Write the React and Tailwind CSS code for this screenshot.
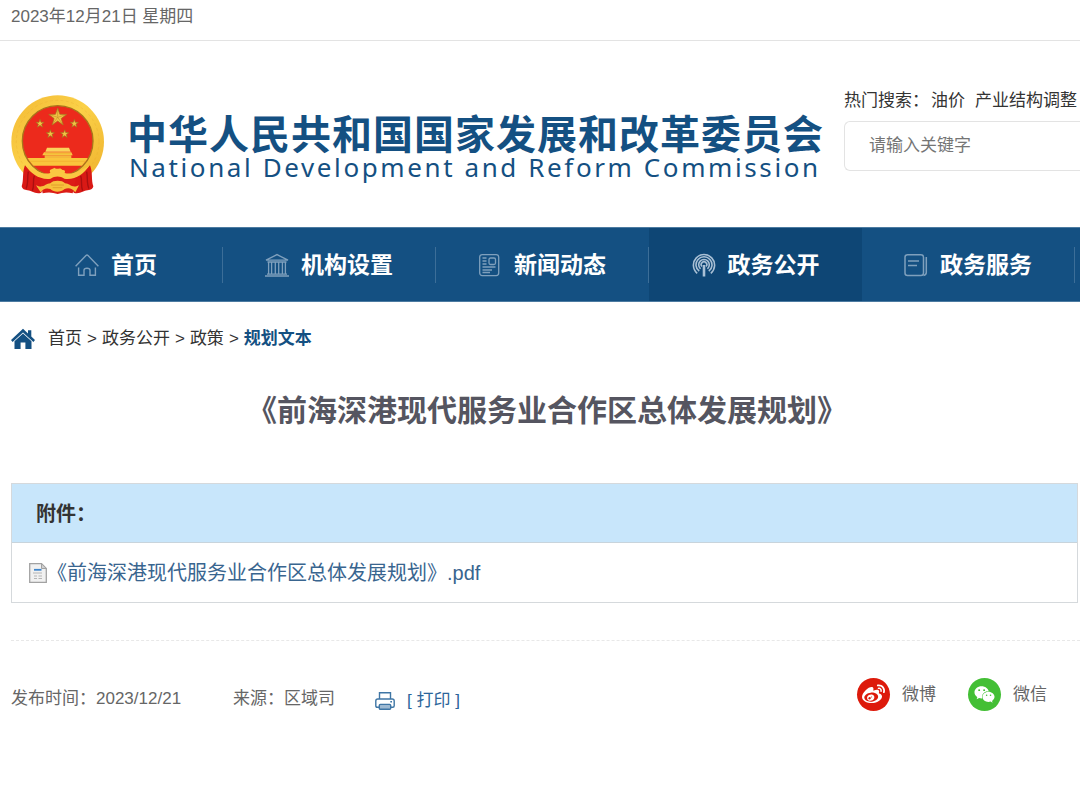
import React from "react";
import { FaWeibo, FaWeixin } from "react-icons/fa";

const NAVY = "#145082";

function starPoints(cx, cy, r) {
  const pts = [];
  for (let i = 0; i < 10; i++) {
    const radius = i % 2 === 0 ? r : r * 0.4;
    const a = (Math.PI / 5) * i - Math.PI / 2;
    pts.push(`${(cx + radius * Math.cos(a)).toFixed(1)},${(cy + radius * Math.sin(a)).toFixed(1)}`);
  }
  return pts.join(" ");
}

function Emblem() {
  return (
    <svg viewBox="30 45 285 300" className="h-[100px] w-[95px] shrink-0" role="img" aria-label="国徽">
      <defs>
        <linearGradient id="gold" x1="0" y1="0" x2="1" y2="1">
          <stop offset="0" stopColor="#f3b935" />
          <stop offset="0.45" stopColor="#fbd148" />
          <stop offset="1" stopColor="#eeb02c" />
        </linearGradient>
        <clipPath id="disc">
          <circle cx="173" cy="183" r="104" />
        </clipPath>
      </defs>
      <circle cx="173" cy="185" r="139" fill="url(#gold)" />
      <circle cx="173" cy="185" r="124" fill="none" stroke="#e2a526" strokeWidth="3" strokeDasharray="9 7" opacity="0.25" />
      <circle cx="173" cy="183" r="106" fill="#ec2a1c" stroke="#a8761b" strokeWidth="4" />
      <g fill="#f2c244" stroke="#a06f1c" strokeWidth="2">
        <polygon points={starPoints(173, 112, 28)} />
        <polygon points={starPoints(120, 131, 13)} />
        <polygon points={starPoints(223, 131, 13)} />
        <polygon points={starPoints(151, 162, 13)} />
        <polygon points={starPoints(194, 162, 13)} />
      </g>
      <path d="M173 84V110M173 112L200 103M173 112L190 135M173 112L156 135M173 112L146 103" stroke="#b98220" strokeWidth="1.5" />
      <g clipPath="url(#disc)">
        <path d="M141 203H207L212 215H136Z" fill="#fbd35a" />
        <path d="M132 217H214L218 226H127Z" fill="#f8c843" />
        <path d="M134 226H214V234H134Z" fill="#f4b73c" />
        <path d="M76 234H270V257H76Z" fill="#fac53c" />
        <path d="M82 244H264M135 221H212" stroke="#f0ae2d" strokeWidth="2" />
      </g>
      <path d="M75 256C88 272 112 286 140 298L124 338C105 344 93 330 82 331C73 330 67 327 65 319C72 302 66 278 75 256Z" fill="#d91915" />
      <path d="M270 256C257 272 233 286 205 298L221 338C240 344 252 330 263 331C274 330 279 325 280 319C273 302 279 278 270 256Z" fill="#d91915" />
      <path d="M85 275C81 295 86 310 78 326M103 287C97 304 104 317 97 332M260 275C264 295 259 310 267 326M242 287C248 304 241 317 248 332" fill="none" stroke="#a90f10" strokeWidth="4" />
      <path d="M118 296L173 285L228 296L218 340Q195 334 173 342Q150 334 128 340Z" fill="#dc1d17" />
      <path d="M78 258C106 272 130 286 151 279C145 265 159 269 163 263C170 270 178 262 184 267C187 273 199 267 194 279C216 286 240 272 267 258C252 282 224 301 193 296C181 287 164 287 152 296C121 301 92 281 78 258Z" fill="#fac842" />
      <path d="M108 316C130 327 137 310 151 310C159 300 187 300 195 310C210 310 215 327 237 316L226 337C217 324 204 323 194 327C181 338 163 338 151 327C140 323 129 325 122 337Z" fill="#f7bf3c" />
      <path d="M153 315L192 315M158 323H187" stroke="#d99024" strokeWidth="2" />
    </svg>
  );
}

const iconProps = {
  viewBox: "0 0 24 24",
  className: "size-6 shrink-0",
  fill: "none",
  stroke: "currentColor",
  "aria-hidden": true,
};

function HouseIcon() {
  return (
    <svg {...iconProps} strokeWidth="1.4">
      <path d="M.6 13.2 11 2.4Q12 1.4 13 2.4L23.4 13.2M3.6 14.6V22.2H9V17.2Q9 15.2 12 15.2T15 17.2V22.2H20.4V14.6" />
    </svg>
  );
}

function HallIcon() {
  return (
    <svg {...iconProps} strokeWidth="1.3">
      <path d="M1 7.2 12 1.6 23 7.2ZM2.5 9H21.5M3.6 9V21M6.6 9V21M10.3 9V21M13.7 9V21M17.4 9V21M20.4 9V21M2 21.2H22M0 23H24" />
    </svg>
  );
}

function NewsIcon() {
  return (
    <svg {...iconProps} strokeWidth="1.3">
      <rect x="1.7" y="1.6" width="19" height="21" rx="2.5" />
      <rect x="11" y="5" width="6.5" height="6.5" rx="1.5" />
      <path d="M4.5 5H8.5M4.5 8H8.5M4.5 11H8.5M4.5 14H17.5M4.5 17H14M4.5 19.5H12" />
    </svg>
  );
}

function BroadcastIcon() {
  return (
    <svg {...iconProps} strokeWidth="1.6">
      <path d="M5.2 20.3A10.6 10.6 0 1 1 18.8 20.3M7.2 18.2A8 8 0 1 1 16.8 18.2M8.5 15.8A5.3 5.3 0 1 1 15.5 15.8M9.9 13.5A2.8 2.8 0 1 1 14.1 13.5" />
      <path d="M12 12V23.5" strokeWidth="2.6" />
    </svg>
  );
}

function ServiceIcon() {
  return (
    <svg {...iconProps} strokeWidth="1.5">
      <rect x="1" y="1.7" width="18.5" height="20.8" rx="2.5" />
      <path d="M4 8H15M4 12.5H13M19.5 22.4Q22.2 22 22.3 19.5V4" />
    </svg>
  );
}

function HomeSolidIcon() {
  return (
    <svg viewBox="0 0 24 22" className="h-[22px] w-6 shrink-0" fill={NAVY} aria-hidden="true">
      <path d="M12 .8 17 5.4V2.3H20.3V8.4L24 12 22.4 13.9 12 4.6 1.6 13.9 0 12Z" />
      <path d="M12 5.6 20.5 13.2V21H14.4V14.5H9.6V21H3.5V13.2Z" />
    </svg>
  );
}

function FileIcon() {
  return (
    <svg viewBox="0 0 18 20" className="h-5 w-[18px] shrink-0" fill="none" aria-hidden="true">
      <path d="M.7.7H12.5L17.3 5.5V19.3H.7Z" fill="#f1f1f1" stroke="#a2a2a2" strokeWidth="1.3" />
      <path d="M12.5.7V5.5H17.3Z" fill="#d2d2d2" stroke="#a2a2a2" />
      <path d="M5 6.8H12.5" stroke="#3f86cc" strokeWidth="1.8" />
      <path d="M4 10H13M5 13H8M9.5 13H13M5 15.5H8M9.5 15.5H13" stroke="#b5b5b5" strokeWidth="1.2" />
    </svg>
  );
}

function PrintIcon() {
  return (
    <svg viewBox="0 0 20 18" className="h-[18px] w-5 shrink-0" fill="none" stroke="#3f76a5" strokeWidth="1.4" aria-hidden="true">
      <path d="M4.5 7V.8H15.5V7" />
      <path d="M4 15.3H2.2Q.8 15.3.8 13.8V9Q.8 7 2.8 7H17.2Q19.2 7 19.2 9V13.8Q19.2 15.3 17.8 15.3H16" />
      <rect x="4.3" y="12.4" width="11.4" height="4.8" rx="1" fill="#9db9d2" />
      <path d="M15.3 9.8H17" />
    </svg>
  );
}

const navItems = [
  { label: "首页", Icon: HouseIcon },
  { label: "机构设置", Icon: HallIcon },
  { label: "新闻动态", Icon: NewsIcon },
  { label: "政务公开", Icon: BroadcastIcon, active: true },
  { label: "政务服务", Icon: ServiceIcon },
];

export default function App() {
  return (
    <div className="overflow-x-hidden bg-white font-['Liberation_Sans','Noto_Sans_CJK_SC',sans-serif] text-[17px] leading-6 text-[#666]">
      <div className="border-b border-[#e3e3e3] px-[11px] pt-[5px] pb-[11px]">2023年12月21日 星期四</div>

      <header className="flex items-start pt-[48px] pl-[10px]">
        <a href="#" className="flex shrink-0 items-start gap-[22px] pt-[6px] pb-8 text-[#145082]">
          <Emblem />
          <span className="flex flex-col pt-[17px] whitespace-nowrap">
            <span className="text-[40px] leading-[46px] font-bold tracking-wide">中华人民共和国国家发展和改革委员会</span>
            <span className="pl-[2px] font-['Noto_Sans','Open_Sans',sans-serif] text-[26px] leading-[18px] tracking-widest">
              National Development and Reform Commission
            </span>
          </span>
        </a>
        <form className="ml-auto w-[236px] shrink-0" onSubmit={(e) => e.preventDefault()}>
          <div className="flex gap-[10px] overflow-hidden whitespace-nowrap text-[#333]">
            <label htmlFor="keyword" className="-mr-2 shrink-0">热门搜索：</label>
            <a href="#" className="shrink-0">油价</a>
            <a href="#" className="shrink-0">产业结构调整</a>
          </div>
          <input
            id="keyword"
            type="text"
            placeholder="请输入关键字"
            className="mt-2 block h-[50px] w-full rounded-l-md border border-r-0 border-[#e3e3e3] px-6 placeholder:text-[#757575]"
          />
        </form>
      </header>

      <nav className="flex overflow-hidden border-y border-[#4c7ba1] bg-[#145082] pl-[10px]">
        {navItems.map(({ label, Icon, active }) => (
          <a
            key={label}
            href="#"
            className={
              active
                ? "flex h-[73px] w-[213px] shrink-0 items-center bg-[#0e4675]"
                : "flex h-[73px] w-[213px] shrink-0 items-center"
            }
          >
            <span
              className={
                active
                  ? "flex h-9 flex-1 items-center justify-center gap-3 text-[#a9c0d5]"
                  : "flex h-9 flex-1 items-center justify-center gap-3 border-r border-[#3c6e98] text-[#7fa0bd]"
              }
            >
              <Icon />
              <span className="text-[23px] leading-8 font-bold text-white">{label}</span>
            </span>
          </a>
        ))}
      </nav>

      <main className="pl-[11px]">
        <div className="flex items-center gap-[13px] pt-[25px] text-[#333]">
          <HomeSolidIcon />
          <div className="flex gap-[5px]">
            <a href="#">首页</a>
            <span>&gt;</span>
            <a href="#">政务公开</a>
            <span>&gt;</span>
            <a href="#">政策</a>
            <span>&gt;</span>
            <a href="#" className="font-bold text-[#145082]">规划文本</a>
          </div>
        </div>

        <h1 className="mt-10 pl-[3px] text-center text-[30px] leading-10 font-bold text-[#555560]">
          《前海深港现代服务业合作区总体发展规划》
        </h1>

        <section className="mt-[52px] mr-[2px] border border-[#d5d9dc] text-[20px]">
          <h2 className="border-b border-[#c8d4dc] bg-[#c8e6fb] pt-4 pb-[14px] pl-6 leading-7 font-bold text-[#333]">附件：</h2>
          <a href="#" className="flex items-center pt-4 pb-[15px] pl-[17px] leading-7 text-[#39658f]">
            <FileIcon />
            <span>《前海深港现代服务业合作区总体发展规划》.pdf</span>
          </a>
        </section>

        <footer className="mt-[37px] flex items-start border-t border-dashed border-[#e8e8e8] pt-[37px] pr-[33px]">
          <span className="pt-[9px]">发布时间：2023/12/21</span>
          <span className="ml-[52px] pt-[9px]">来源：区域司</span>
          <button type="button" className="ml-10 flex items-center gap-3 pt-[11px] text-[#2c659a]">
            <PrintIcon />
            <span>[ 打印 ]</span>
          </button>
          <div className="ml-auto flex gap-8">
            <a href="#" className="flex items-center gap-3">
              <span className="flex size-[33px] items-center justify-center rounded-full bg-[#dd1a0b] text-white">
                <FaWeibo size={23} />
              </span>
              微博
            </a>
            <a href="#" className="flex items-center gap-3">
              <span className="flex size-[33px] items-center justify-center rounded-full bg-[#43bf35] text-white">
                <FaWeixin size={21} />
              </span>
              微信
            </a>
          </div>
        </footer>
      </main>
    </div>
  );
}
